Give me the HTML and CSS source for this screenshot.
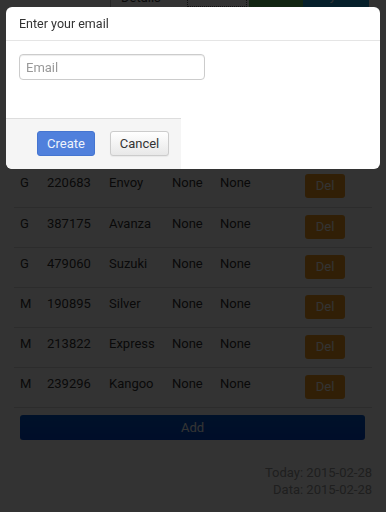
FILE: index.html
```html
<!DOCTYPE html>
<html lang="en">
<head>
    <meta charset="UTF-8">
    <meta name="viewport" content="width=device-width, initial-scale=1.0">
    <title>Cars</title>
    <link rel="stylesheet" href="styles.css">
</head>
<body>
    <div class="page">
        <div class="toolbar">
            <div class="tool-spacer"></div>
            <div class="tool-tab">Details</div>
            <div class="tool-box"></div>
            <div class="tool-btn green">Refresh</div>
            <div class="tool-btn blue">Sync</div>
        </div>

        <table class="cars">
            <colgroup>
                <col style="width:27px">
                <col style="width:62px">
                <col style="width:63px">
                <col style="width:48px">
                <col style="width:85px">
                <col style="width:73px">
            </colgroup>
            <tbody>
                <tr><td>G</td><td>220683</td><td>Envoy</td><td>None</td><td>None</td><td><span class="btn-del">Del</span></td></tr>
                <tr><td>G</td><td>387175</td><td>Avanza</td><td>None</td><td>None</td><td><span class="btn-del">Del</span></td></tr>
                <tr><td>G</td><td>479060</td><td>Suzuki</td><td>None</td><td>None</td><td><span class="btn-del">Del</span></td></tr>
                <tr><td>M</td><td>190895</td><td>Silver</td><td>None</td><td>None</td><td><span class="btn-del">Del</span></td></tr>
                <tr><td>M</td><td>213822</td><td>Express</td><td>None</td><td>None</td><td><span class="btn-del">Del</span></td></tr>
                <tr><td>M</td><td>239296</td><td>Kangoo</td><td>None</td><td>None</td><td><span class="btn-del">Del</span></td></tr>
            </tbody>
        </table>

        <div class="btn-add">Add</div>

        <div class="dates">
            <p>Today: 2015-02-28</p>
            <p>Data: 2015-02-28</p>
        </div>
    </div>

    <!-- modal -->
    <div class="backdrop"></div>
    <div class="modal">
        <div class="modal-header">Enter your email</div>
        <div class="modal-body">
            <input class="email" type="text" placeholder="Email">
        </div>
        <div class="modal-footer">
            <button class="btn btn-primary">Create</button>
            <button class="btn btn-default">Cancel</button>
        </div>
    </div>
</body>
</html>
```

FILE: styles.css
```css
body {
    margin: 0;
    font-family: Roboto, "Liberation Sans", Arial, sans-serif;
    font-size: 13px;
    color: #333;
    background-color: white;
    overflow: hidden;
}

.page {
    padding: 0 14px;
}

.toolbar {
    display: flex;
    height: 29px;
    margin-top: -22px;
}

.tool-spacer {
    width: 96px;
}

.tool-tab {
    width: 77px;
    border-left: 1px solid #bbb;
    padding: 12px 0 0 10px;
    box-sizing: border-box;
}

.tool-box {
    width: 60px;
    border: 1px dotted #555;
    box-sizing: border-box;
}

.tool-btn {
    color: white;
    text-align: center;
    padding-top: 10px;
    box-sizing: border-box;
}

.tool-btn.green {
    width: 54px;
    margin-left: 2px;
    background-color: #5bb75b;
}

.tool-btn.blue {
    width: 66px;
    background-color: #1a9bd0;
}

.cars {
    width: 100%;
    table-layout: fixed;
    border-collapse: collapse;
    margin-top: 160px;
}

.cars td {
    height: 40px;
    padding: 7px 6px 0;
    box-sizing: border-box;
    text-align: left;
    vertical-align: top;
    line-height: 18px;
    border-bottom: 1px solid #ddd;
    white-space: nowrap;
}

.btn-del {
    display: inline-block;
    width: 40px;
    height: 24px;
    line-height: 24px;
    margin-top: 0;
    text-align: center;
    color: white;
    background-color: #f39c1e;
    border-radius: 3px;
}

.btn-add {
    margin: 7px 7px 0 6px;
    height: 25px;
    line-height: 25px;
    text-align: center;
    color: white;
    background-color: #0050cc;
    background-image: linear-gradient(#0058cc, #0044cc);
    border-radius: 3px;
}

.dates {
    text-align: right;
    color: #999;
    margin-top: 24px;
    font-size: 13px;
}

.dates p {
    margin: 0;
    line-height: 17px;
}

.backdrop {
    position: fixed;
    inset: 0;
    background-color: rgba(0, 0, 0, 0.8);
}

.modal {
    position: fixed;
    left: 6px;
    top: 7px;
    width: 374px;
    height: 162px;
    background-color: white;
    border-radius: 6px;
    display: flex;
    flex-direction: column;
    overflow: hidden;
}

.modal-header {
    height: 34px;
    line-height: 33px;
    padding: 0 13px;
    border-bottom: 1px solid #e5e5e5;
    box-sizing: border-box;
    color: #333;
    font-size: 12.5px;
}

.modal-body {
    height: 77px;
    padding: 13px;
    box-sizing: border-box;
}

.email {
    width: 186px;
    height: 26px;
    padding: 0 6px;
    box-sizing: border-box;
    border: 1px solid #ccc;
    border-radius: 4px;
    font-family: inherit;
    font-size: 13px;
    color: #555;
    box-shadow: inset 0 1px 1px rgba(0,0,0,0.075);
}

.email::placeholder {
    color: #999;
}

.modal-footer {
    flex: 1;
    align-self: flex-start;
    display: flex;
    gap: 15px;
    padding: 12px 12px 0 31px;
    background-color: #f5f5f5;
    border-top: 1px solid #ddd;
    border-bottom-left-radius: 6px;
}

.btn {
    height: 25px;
    padding: 0;
    border-radius: 3px;
    font-family: inherit;
    font-size: 13px;
}

.btn-primary {
    width: 58px;
    color: #eef3fb;
    background-color: #5080dc;
    border: 1px solid #4575d0;
}

.btn-default {
    width: 59px;
    color: #333;
    background-image: linear-gradient(#fff, #e8e8e8);
    border: 1px solid #ccc;
    box-shadow: 0 1px 1px rgba(0,0,0,0.05);
}
```
